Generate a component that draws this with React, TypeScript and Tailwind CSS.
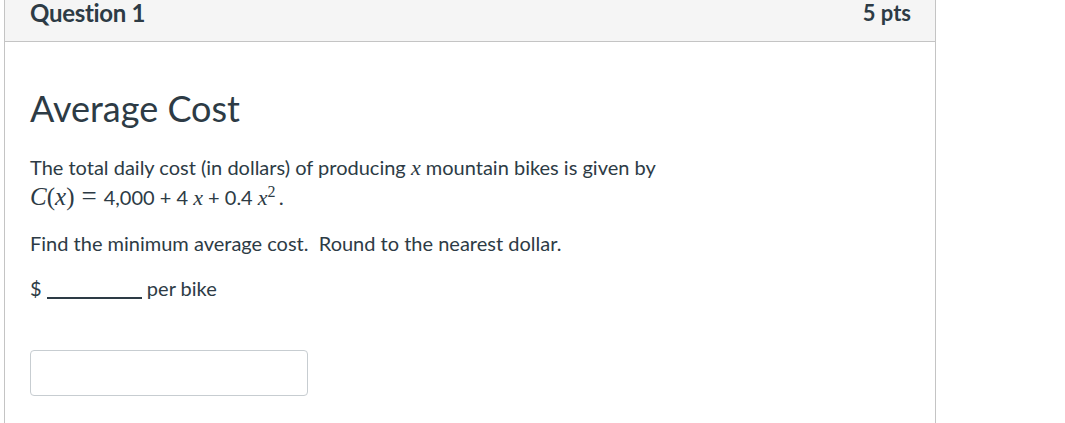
export default function App() {
  const serif = "font-['Liberation_Serif',serif] leading-[0]";
  return (
    <div className="min-h-[423px] bg-white font-['Lato',sans-serif] text-[#2d3b45]">
      <div className="ml-[4px] w-[932px] min-h-[423px] border-x border-[#c4c4c4]">
        <div className="flex h-[42px] items-start justify-between border-b border-[#c4c4c4] bg-[#f5f5f5] pl-[25px] pr-[24px]">
          <h2 className="text-[24px] leading-[26px] font-bold tracking-[-0.3px]">Question 1</h2>
          <div className="text-[22px] leading-[26px] font-bold">5 pts</div>
        </div>
        <div className="px-[25px]">
          <h1 className="mt-[45px] text-[36px] leading-[43px] font-normal">Average Cost</h1>
          <p className="mt-[22px] text-[20px] leading-[30px]">
            The total daily cost (in dollars) of producing{" "}
            <span className={`${serif} italic text-[22px]`}>x</span> mountain bikes is given by
            <br />
            <span className={`${serif} text-[25px]`}>
              <span className="italic">C</span>(<span className="italic">x</span>)
            </span>
            <span className={`${serif} mx-[7px] text-[27px]`}>=</span>
            4,000 + 4 <span className={`${serif} italic text-[22px]`}>x</span> + 0.4{" "}
            <span className={`${serif} italic text-[22px]`}>x</span>
            <sup className={`${serif} text-[16px]`}>2</sup>
            <span className={`${serif} ml-[3px] text-[22px]`}>.</span>
          </p>
          <p className="mt-[16px] text-[20px] leading-[30px]">
            Find the minimum average cost.&nbsp; Round to the nearest dollar.
          </p>
          <p className="mt-[15px] text-[20px] leading-[30px]">
            ${" "}
            <span className="inline-block h-[20px] w-[95px] translate-y-[3px] border-b-2 border-[#2d3b45] align-baseline"></span>{" "}
            per bike
          </p>
          <input
            type="text"
            aria-label="Answer"
            className="mt-[47px] h-[46px] w-[278px] rounded-[4px] border border-[#c7cdd1] bg-white px-3 text-[18px] outline-none"
          />
        </div>
      </div>
    </div>
  );
}
